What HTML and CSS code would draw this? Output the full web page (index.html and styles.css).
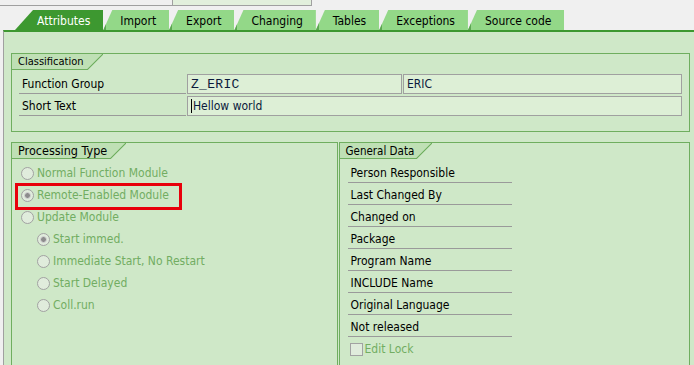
FILE: index.html
```html
<!doctype html>
<html>
  <head>
    <meta charset="utf-8">
    <title>Function Builder: Attributes</title>
    <meta name="viewport" content="width=device-width, initial-scale=1">
    <link rel="stylesheet" href="styles.css">
  </head>
  <body>
    <div class="topbar">
      <div class="top-label">Function Module</div>
      <div class="top-field">Z_REIGH_RFC_TEST</div>
      <div class="top-status">Active</div>
    </div>

    <div class="tabs">
      <div class="tab tab-first tab-active">Attributes</div>
      <div class="tab">Import</div>
      <div class="tab">Export</div>
      <div class="tab">Changing</div>
      <div class="tab">Tables</div>
      <div class="tab">Exceptions</div>
      <div class="tab">Source code</div>
    </div>

    <div class="panel">
      <div class="group group-class">
        <div class="group-title">Classification</div>
        <div class="form-rows">
          <div class="form-row">
            <span class="field-label">Function Group</span>
            <span class="field field-mono field-group">Z_ERIC</span>
            <span class="field field-desc">ERIC</span>
          </div>
          <div class="form-row">
            <span class="field-label">Short Text</span>
            <span class="field field-text"><span class="caret"></span>Hellow world</span>
          </div>
        </div>
      </div>

      <div class="columns">
        <div class="group group-proc">
          <div class="group-title title-large">Processing Type</div>
          <div class="option-list">
            <div class="radio"><span class="radio-dot"></span>Normal Function Module</div>
            <div class="radio"><span class="radio-dot on"></span>Remote-Enabled Module</div>
            <div class="radio"><span class="radio-dot"></span>Update Module</div>
            <div class="radio sub"><span class="radio-dot on"></span>Start immed.</div>
            <div class="radio sub"><span class="radio-dot"></span>Immediate Start, No Restart</div>
            <div class="radio sub"><span class="radio-dot"></span>Start Delayed</div>
            <div class="radio sub"><span class="radio-dot"></span>Coll.run</div>
          </div>
          <div class="highlight"></div>
        </div>

        <div class="group group-gen">
          <div class="group-title title-mid">General Data</div>
          <div class="info-list">
            <div class="info-label">Person Responsible</div>
            <div class="info-label">Last Changed By</div>
            <div class="info-label">Changed on</div>
            <div class="info-label">Package</div>
            <div class="info-label">Program Name</div>
            <div class="info-label">INCLUDE Name</div>
            <div class="info-label">Original Language</div>
            <div class="info-label">Not released</div>
            <div class="check"><span class="check-box"></span>Edit Lock</div>
            <div class="check"><span class="check-box"></span>Global</div>
          </div>
        </div>
      </div>
    </div>
  </body>
</html>
```

FILE: styles.css
```css
html,
body {
  margin: 0;
  height: 100%;
  overflow: hidden;
}
body {
  background: #f0f0f0;
  color: #000;
  font-family: "DejaVu Sans Condensed", "DejaVu Sans", sans-serif;
  font-stretch: condensed;
  font-size: 12px;
}

/* header row, mostly scrolled out of view */
.topbar {
  display: flex;
  align-items: flex-end;
  height: 6px;
  overflow: hidden;
}
.top-label {
  width: 172px;
  height: 20px;
  line-height: 12px;
  padding-left: 3px;
  box-sizing: border-box;
  border-bottom: 1px solid #a0a0a0;
}
.top-field {
  width: 140px;
  height: 20px;
  line-height: 12px;
  padding-left: 3px;
  box-sizing: border-box;
  border: 1px solid #a0a0a0;
  background: #e2f0dc;
  font-family: "Liberation Mono", monospace;
  font-size: 13px;
}
.top-status {
  margin-left: 110px;
  height: 20px;
  line-height: 12px;
}

/* tab strip */
.tabs {
  display: flex;
  height: 20px;
  margin-top: 4px;
  padding-left: 15px;
}
.tab {
  position: relative;
  display: flex;
  align-items: center;
  padding: 2px 13px 0 17px;
  box-sizing: border-box;
  background: #93d888;
  clip-path: polygon(9px 0, 100% 0, 100% 100%, 0 100%);
}
.tab::before {
  content: '';
  position: absolute;
  left: 0;
  bottom: 0;
  width: 3px;
  height: 8px;
  background: #5da852;
}
.tab-first {
  padding-left: 22px;
  clip-path: polygon(18px 0, 100% 0, 100% 100%, 0 100%);
}
.tab-active {
  background: #3d9830;
  color: #fff;
}
.tab-active::before {
  display: none;
}

/* main area */
.panel {
  margin-left: 3px;
  height: 400px;
  padding: 21px 4px 0 7px;
  border-top: 2px solid #3d9830;
  border-left: 1px solid #a0a0a0;
  background: #cfe8c8;
}
.group {
  position: relative;
  display: flex;
  flex-direction: column;
  align-items: flex-start;
  border: 1px solid #6fae5f;
}
.group-title {
  position: relative;
  height: 16px;
  line-height: 16px;
  padding: 0 20px 0 6px;
  box-sizing: border-box;
  border-bottom: 1px solid #6fae5f;
  background: #bfe0b5;
  font-size: 11px;
}
.group-title::after {
  content: '';
  position: absolute;
  top: 0;
  right: 0;
  bottom: -1px;
  width: 16px;
  background: linear-gradient(to bottom right, #bfe0b5 calc(50% - 1px), #6fae5f 50%, #cfe8c8 calc(50% + 1px));
}
.title-mid {
  font-size: 11.5px;
  padding-right: 18px;
}
.title-large {
  font-size: 12.5px;
  padding-right: 19px;
}

/* classification */
.group-class {
  padding-bottom: 15px;
}
.form-rows {
  display: flex;
  flex-direction: column;
  gap: 2px;
  margin: 4px 0 0 7px;
}
.form-row {
  display: flex;
  gap: 1px;
}
.field-label {
  width: 167px;
  height: 20px;
  line-height: 21px;
  padding-left: 3px;
  box-sizing: border-box;
  border-bottom: 1px solid #9a9a9a;
}
.field {
  height: 20px;
  line-height: 19px;
  padding-left: 3px;
  box-sizing: border-box;
  border: 1px solid #a0a0a0;
  background: #ddefd6;
  color: #0b1a3c;
}
.field-mono {
  font-family: "Liberation Mono", monospace;
  font-size: 13px;
  letter-spacing: 0.3px;
}
.field-group {
  width: 215px;
}
.field-desc {
  width: 279px;
}
.field-text {
  width: 495px;
  display: flex;
  align-items: center;
}
.caret {
  width: 1px;
  height: 14px;
  margin-right: 1px;
  background: #000;
}

/* lower columns */
.columns {
  display: flex;
  gap: 1px;
  margin-top: 10px;
}
.group-proc {
  width: 327px;
  height: 260px;
  box-sizing: border-box;
}
.group-gen {
  width: 352px;
  height: 260px;
  box-sizing: border-box;
}

.option-list {
  display: flex;
  flex-direction: column;
  padding: 3px 0 0 9px;
}
.radio {
  display: flex;
  align-items: center;
  gap: 3px;
  height: 22px;
  color: #72ad62;
}
.radio.sub {
  padding-left: 16px;
}
.radio-dot {
  position: relative;
  width: 13px;
  height: 13px;
  box-sizing: border-box;
  border: 1px solid #a2a2a2;
  border-radius: 50%;
  background: #e0ecdc;
}
.radio-dot.on::after {
  content: '';
  position: absolute;
  top: 2px;
  left: 2px;
  width: 7px;
  height: 7px;
  box-sizing: border-box;
  border: 1px solid #d8d8d8;
  border-radius: 50%;
  background: #8c8c8c;
}

/* annotation drawn over the screenshot */
.highlight {
  position: absolute;
  top: 40px;
  left: 3px;
  width: 167px;
  height: 27px;
  box-sizing: border-box;
  border: 3px solid #e8000b;
}

.info-list {
  display: flex;
  flex-direction: column;
  padding: 3px 0 0 8px;
}
.info-label {
  width: 164px;
  height: 21px;
  line-height: 22px;
  margin-bottom: 1px;
  padding-left: 3px;
  box-sizing: border-box;
  border-bottom: 1px solid #9a9a9a;
}
.check {
  display: flex;
  align-items: center;
  gap: 2px;
  height: 22px;
  padding-left: 2px;
  color: #72ad62;
}
.check-box {
  width: 13px;
  height: 13px;
  box-sizing: border-box;
  border: 1px solid #a2a2a2;
  background: #e0ecdc;
}
```
